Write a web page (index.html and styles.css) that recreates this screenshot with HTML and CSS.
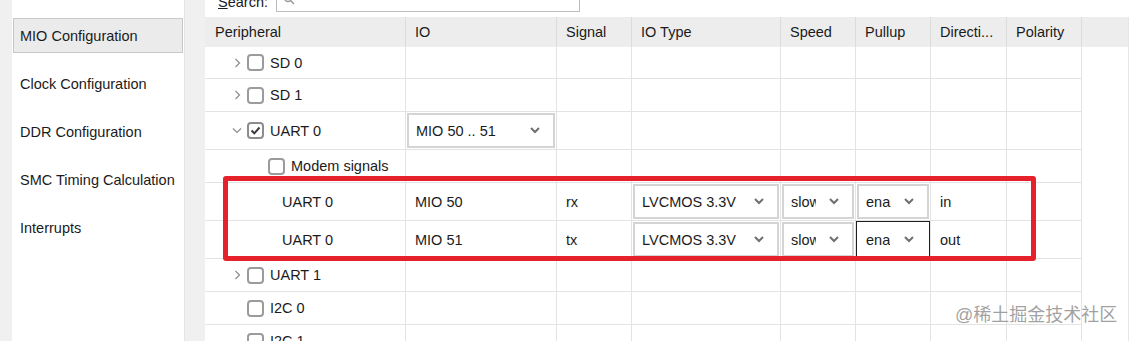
FILE: index.html
```html
<!DOCTYPE html>
<html>
<head>
    <title>MIO Configuration</title>
    <link rel="stylesheet" href="styles.css">
</head>
<body>
    <div class="app">
        <nav class="sidebar">
            <div class="nav-item selected">MIO Configuration</div>
            <div class="nav-item">Clock Configuration</div>
            <div class="nav-item">DDR Configuration</div>
            <div class="nav-item">SMC Timing Calculation</div>
            <div class="nav-item">Interrupts</div>
        </nav>

        <main class="main">
            <div class="search">
                <label><u>S</u>earch:</label>
                <div class="search-box">
                    <svg width="12" height="12" viewBox="0 0 12 12"><circle cx="5" cy="5" r="3.5" fill="none" stroke="#9a9a9a" stroke-width="1.4"/><path d="M7.5 7.5 L11 11" stroke="#9a9a9a" stroke-width="1.4"/></svg>
                </div>
            </div>

            <div class="table">
                <div class="thead">
                    <div class="th first">Peripheral</div>
                    <div class="th">IO</div>
                    <div class="th">Signal</div>
                    <div class="th">IO Type</div>
                    <div class="th">Speed</div>
                    <div class="th">Pullup</div>
                    <div class="th">Directi...</div>
                    <div class="th">Polarity</div>
                    <div class="th filler"></div>
                </div>

                <div class="tbody">
                    <div class="row">
                        <div class="cell tree">
                            <span class="twisty"><svg width="7" height="10" viewBox="0 0 7 10"><path d="M1.5 1 L5.5 5 L1.5 9" fill="none" stroke="#8d8d8d" stroke-width="1.2"/></svg></span>
                            <span class="check"></span>SD 0
                        </div>
                        <div class="cell"></div><div class="cell"></div><div class="cell"></div>
                        <div class="cell"></div><div class="cell"></div><div class="cell"></div><div class="cell"></div>
                    </div>

                    <div class="row">
                        <div class="cell tree">
                            <span class="twisty"><svg width="7" height="10" viewBox="0 0 7 10"><path d="M1.5 1 L5.5 5 L1.5 9" fill="none" stroke="#8d8d8d" stroke-width="1.2"/></svg></span>
                            <span class="check"></span>SD 1
                        </div>
                        <div class="cell"></div><div class="cell"></div><div class="cell"></div>
                        <div class="cell"></div><div class="cell"></div><div class="cell"></div><div class="cell"></div>
                    </div>

                    <div class="row tall">
                        <div class="cell tree">
                            <span class="twisty"><svg width="10" height="7" viewBox="0 0 10 7"><path d="M1 1.5 L5 5.5 L9 1.5" fill="none" stroke="#8d8d8d" stroke-width="1.2"/></svg></span>
                            <span class="check checked"><svg width="13" height="13" viewBox="0 0 13 13"><path d="M2.5 6.5 L5.3 9.3 L10.5 3.5" fill="none" stroke="#3a3a3a" stroke-width="2"/></svg></span>UART 0
                        </div>
                        <div class="cell has-select">
                            <div class="select"><span class="select-text">MIO 50 .. 51</span><span class="caret"><svg width="10" height="7" viewBox="0 0 10 7"><path d="M1 1 L5 5 L9 1" fill="none" stroke="#6f6f6f" stroke-width="2"/></svg></span></div>
                        </div>
                        <div class="cell"></div><div class="cell"></div>
                        <div class="cell"></div><div class="cell"></div><div class="cell"></div><div class="cell"></div>
                    </div>

                    <div class="row">
                        <div class="cell tree level-2">
                            <span class="check"></span>Modem signals
                        </div>
                        <div class="cell"></div><div class="cell"></div><div class="cell"></div>
                        <div class="cell"></div><div class="cell"></div><div class="cell"></div><div class="cell"></div>
                    </div>

                    <div class="row tall">
                        <div class="cell signal-name">UART 0</div>
                        <div class="cell">MIO 50</div>
                        <div class="cell">rx</div>
                        <div class="cell has-select">
                            <div class="select"><span class="select-text">LVCMOS 3.3V</span><span class="caret"><svg width="10" height="7" viewBox="0 0 10 7"><path d="M1 1 L5 5 L9 1" fill="none" stroke="#6f6f6f" stroke-width="2"/></svg></span></div>
                        </div>
                        <div class="cell has-select">
                            <div class="select"><span class="select-text">slow</span><span class="caret"><svg width="10" height="7" viewBox="0 0 10 7"><path d="M1 1 L5 5 L9 1" fill="none" stroke="#6f6f6f" stroke-width="2"/></svg></span></div>
                        </div>
                        <div class="cell has-select">
                            <div class="select"><span class="select-text">enabled</span><span class="caret"><svg width="10" height="7" viewBox="0 0 10 7"><path d="M1 1 L5 5 L9 1" fill="none" stroke="#6f6f6f" stroke-width="2"/></svg></span></div>
                        </div>
                        <div class="cell">in</div>
                        <div class="cell"></div>
                    </div>

                    <div class="row tall">
                        <div class="cell signal-name">UART 0</div>
                        <div class="cell">MIO 51</div>
                        <div class="cell">tx</div>
                        <div class="cell has-select">
                            <div class="select"><span class="select-text">LVCMOS 3.3V</span><span class="caret"><svg width="10" height="7" viewBox="0 0 10 7"><path d="M1 1 L5 5 L9 1" fill="none" stroke="#6f6f6f" stroke-width="2"/></svg></span></div>
                        </div>
                        <div class="cell has-select">
                            <div class="select"><span class="select-text">slow</span><span class="caret"><svg width="10" height="7" viewBox="0 0 10 7"><path d="M1 1 L5 5 L9 1" fill="none" stroke="#6f6f6f" stroke-width="2"/></svg></span></div>
                        </div>
                        <div class="cell has-select focused">
                            <div class="select"><span class="select-text">enabled</span><span class="caret"><svg width="10" height="7" viewBox="0 0 10 7"><path d="M1 1 L5 5 L9 1" fill="none" stroke="#6f6f6f" stroke-width="2"/></svg></span></div>
                        </div>
                        <div class="cell">out</div>
                        <div class="cell"></div>
                    </div>

                    <div class="row">
                        <div class="cell tree">
                            <span class="twisty"><svg width="7" height="10" viewBox="0 0 7 10"><path d="M1.5 1 L5.5 5 L1.5 9" fill="none" stroke="#8d8d8d" stroke-width="1.2"/></svg></span>
                            <span class="check"></span>UART 1
                        </div>
                        <div class="cell"></div><div class="cell"></div><div class="cell"></div>
                        <div class="cell"></div><div class="cell"></div><div class="cell"></div><div class="cell"></div>
                    </div>

                    <div class="row">
                        <div class="cell tree">
                            <span class="twisty"></span>
                            <span class="check"></span>I2C 0
                        </div>
                        <div class="cell"></div><div class="cell"></div><div class="cell"></div>
                        <div class="cell"></div><div class="cell"></div><div class="cell"></div><div class="cell"></div>
                    </div>

                    <div class="row">
                        <div class="cell tree">
                            <span class="twisty"></span>
                            <span class="check"></span>I2C 1
                        </div>
                        <div class="cell"></div><div class="cell"></div><div class="cell"></div>
                        <div class="cell"></div><div class="cell"></div><div class="cell"></div><div class="cell"></div>
                    </div>
                </div>
            </div>
        </main>
    </div>

    <!-- annotation drawn over the screenshot -->
    <div class="highlight"></div>
    <div class="watermark">@稀土掘金技术社区</div>
</body>
</html>
```

FILE: styles.css
```css
body { margin: 0; width: 1131px; height: 341px; overflow: hidden; background: #f0f0f0; font-family: "Liberation Sans", Arial, "Noto Sans CJK SC", sans-serif; font-size: 14.5px; color: #1b1b1b; position: relative; }

.app { display: flex; height: 341px; padding-left: 12px; }

/* left navigation */
.sidebar { width: 173px; flex: none; background: #fff; padding-top: 18px; box-sizing: border-box; border-right: 1px solid #e4e4e4; }
.nav-item { height: 35px; margin: 0 1px 13px 1px; padding-left: 6px; display: flex; align-items: center; border: 1px solid transparent; box-sizing: border-box; white-space: nowrap; }
.nav-item.selected { background: #ebebeb; border-color: #c8c8c8; }

/* main panel */
.main { margin-left: 20px; flex: 1; background: #fff; display: flex; flex-direction: column; overflow: hidden; }

.search { height: 17px; flex: none; display: flex; align-items: flex-end; padding-left: 13px; overflow: hidden; }
.search label { line-height: 17px; margin-bottom: 6px; }
.search-box { width: 304px; height: 24px; margin: 0 0 5px 8px; border: 1px solid #bdbdbd; display: flex; align-items: flex-start; padding: 0 0 0 6px; box-sizing: border-box; }
.search-box svg { margin-top: 4px; }

.table { width: 924px; flex: 1; border-right: 1px solid #e6e6e6; box-sizing: border-box; overflow: hidden; }

.thead { display: grid; grid-template-columns: 201px 151px 75px 149px 75px 75px 76px 75px 1fr; height: 30px; background: #ededed; }
.th { border-right: 1px solid #dcdcdc; padding-left: 9px; display: flex; align-items: center; white-space: nowrap; overflow: hidden; }
.th.first { padding-left: 10px; }
.th.filler { border-right: none; }

.row { display: grid; grid-template-columns: 201px 151px 75px 149px 75px 75px 76px 75px; height: 33px; }
.row:first-child { height: 32px; }
.row.tall { height: 38px; }

.cell { border-right: 1px solid #e3e3e3; border-bottom: 1px solid #e3e3e3; padding-left: 9px; display: flex; align-items: center; white-space: nowrap; overflow: hidden; min-width: 0; }
.cell.has-select { padding: 1px; }
.cell.focused { padding: 0; }

/* tree column */
.cell.tree { padding-left: 26px; }
.cell.tree.level-2 { padding-left: 63px; }
.cell.signal-name { padding-left: 77px; }
.twisty { width: 12px; height: 14px; display: flex; align-items: center; justify-content: center; margin-right: 4px; flex: none; }
.check { width: 17px; height: 17px; box-sizing: border-box; border: 2px solid #9b9b9b; border-radius: 4px; margin-right: 6px; flex: none; display: flex; align-items: center; justify-content: center; }
.check.checked { border-color: #8d8d8d; }

/* combo boxes */
.select { flex: 1; align-self: stretch; display: flex; align-items: center; min-width: 0; border: 2px solid #d4d4d4; padding-left: 7px; box-sizing: border-box; }
.focused .select { border: 1px solid #1e1e1e; padding-left: 9px; }
.select-text { flex: 1; overflow: hidden; white-space: nowrap; }
.caret { padding: 0 13px; display: flex; align-items: center; flex: none; }
.focused .caret { padding: 0 15px 0 14px; }

/* overlays */
.highlight { position: absolute; left: 223px; top: 176px; width: 813px; height: 85px; border: 5px solid #e5222c; border-radius: 3px; box-sizing: border-box; }
.watermark { position: absolute; left: 955px; top: 303px; font-size: 18px; line-height: 24px; color: rgba(130, 130, 130, 0.75); white-space: nowrap; }
```
